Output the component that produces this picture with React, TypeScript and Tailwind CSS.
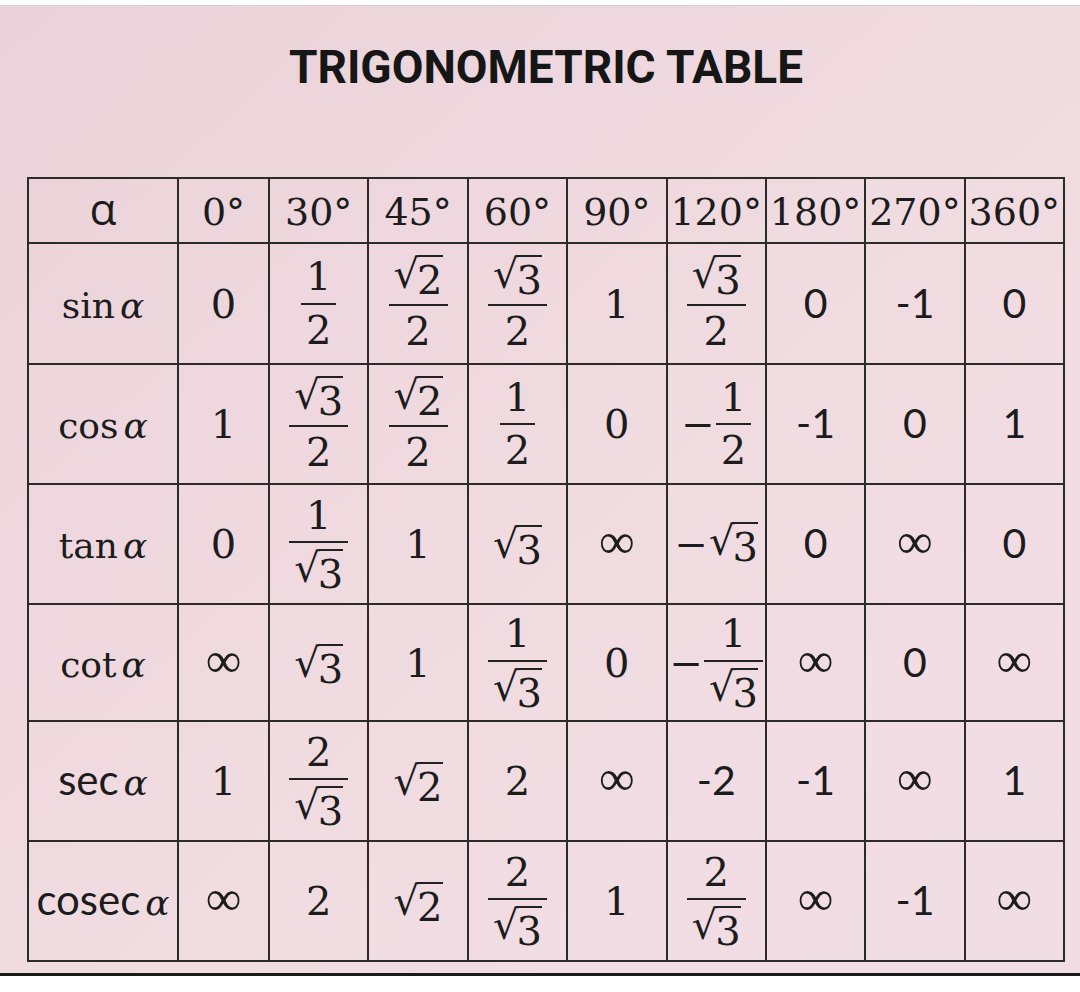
import type { ReactNode } from "react";

const serif = "font-['DejaVu_Serif',serif]";
const sans = "font-['Lato',sans-serif]";

function Sqrt({ n }: { n: string }) {
  return (
    <span className="inline-flex items-start leading-none">
      <span className="leading-none">√</span>
      <span className="-ml-[2px] mt-[1px] border-t-2 border-[#222] pt-[3px] leading-none">
        {n}
      </span>
    </span>
  );
}

function Frac({ num, den }: { num: ReactNode; den: ReactNode }) {
  return (
    <span className="inline-flex flex-col items-center align-middle">
      <span className="px-[5px] leading-[1.08]">{num}</span>
      <span className="my-[4px] h-[2px] self-stretch bg-[#222]" />
      <span className="px-[5px] leading-[1.08]">{den}</span>
    </span>
  );
}

function Neg({ children }: { children: ReactNode }) {
  return (
    <span className="inline-flex items-center">
      <span className="mr-px leading-none">−</span>
      {children}
    </span>
  );
}

const S = ({ children }: { children: ReactNode }) => (
  <span className={`${serif} leading-none`}>{children}</span>
);
const N = ({ children }: { children: ReactNode }) => (
  <span className={`${sans} text-[41px] leading-none`}>{children}</span>
);
const Inf = () => (
  <span className="font-['Liberation_Serif',serif] text-[50px] leading-none">∞</span>
);

const r3 = <Sqrt n="3" />;
const r2 = <Sqrt n="2" />;

const header = ["0°", "30°", "45°", "60°", "90°", "120°", "180°", "270°", "360°"];

const rows: { fn: string; label: "serif" | "sans"; h: string; cells: ReactNode[] }[] = [
  {
    fn: "sin",
    label: "serif",
    h: "h-[121px]",
    cells: [
      <S>0</S>,
      <Frac num="1" den="2" />,
      <Frac num={r2} den="2" />,
      <Frac num={r3} den="2" />,
      <S>1</S>,
      <Frac num={r3} den="2" />,
      <N>0</N>,
      <N>-1</N>,
      <N>0</N>,
    ],
  },
  {
    fn: "cos",
    label: "serif",
    h: "h-[120px]",
    cells: [
      <S>1</S>,
      <Frac num={r3} den="2" />,
      <Frac num={r2} den="2" />,
      <Frac num="1" den="2" />,
      <S>0</S>,
      <Neg>
        <Frac num="1" den="2" />
      </Neg>,
      <N>-1</N>,
      <N>0</N>,
      <N>1</N>,
    ],
  },
  {
    fn: "tan",
    label: "serif",
    h: "h-[120px]",
    cells: [
      <S>0</S>,
      <Frac num="1" den={r3} />,
      <S>1</S>,
      r3,
      <Inf />,
      <Neg>{r3}</Neg>,
      <N>0</N>,
      <Inf />,
      <N>0</N>,
    ],
  },
  {
    fn: "cot",
    label: "serif",
    h: "h-[117px]",
    cells: [
      <Inf />,
      r3,
      <S>1</S>,
      <Frac num="1" den={r3} />,
      <S>0</S>,
      <Neg>
        <Frac num="1" den={r3} />
      </Neg>,
      <Inf />,
      <N>0</N>,
      <Inf />,
    ],
  },
  {
    fn: "sec",
    label: "sans",
    h: "h-[120px]",
    cells: [
      <S>1</S>,
      <Frac num="2" den={r3} />,
      r2,
      <S>2</S>,
      <Inf />,
      <N>-2</N>,
      <N>-1</N>,
      <Inf />,
      <N>1</N>,
    ],
  },
  {
    fn: "cosec",
    label: "sans",
    h: "h-[120px]",
    cells: [
      <Inf />,
      <S>2</S>,
      r2,
      <Frac num="2" den={r3} />,
      <S>1</S>,
      <Frac num="2" den={r3} />,
      <Inf />,
      <N>-1</N>,
      <Inf />,
    ],
  },
];

const cell = "border-2 border-[#2b2b2b] p-0 text-center align-middle";

export default function App() {
  return (
    <div className="flex min-h-[992px] w-[1080px] flex-col bg-white text-[#1c1c1c]">
      <div className="h-[5px] bg-white" />
      <div className="h-px bg-[#d8cfd2]" />
      <div className="h-[967px] bg-linear-to-br from-[#ebd1d9] via-[#f0dbe1] to-[#f1dee4] pl-[27px] pr-[15px]">
        <h1 className="pt-[38px] text-center font-['Roboto',sans-serif] text-[46px] font-bold leading-none text-[#161616]">
          TRIGONOMETRIC TABLE
        </h1>

        <table className={`mt-[87px] w-[1038px] table-fixed border-collapse ${serif} text-[40px]`}>
          <colgroup>
            <col className="w-[150px]" />
            <col className="w-[91px]" />
            {header.slice(1).map((h) => (
              <col key={h} />
            ))}
          </colgroup>
          <tbody>
            <tr className="h-[65px]">
              <td className={cell}>
                <span className="font-['Open_Sans',sans-serif] text-[44px] leading-none">α</span>
              </td>
              {header.map((h) => (
                <td key={h} className={cell}>
                  <span className="text-[38px] leading-none">{h}</span>
                </td>
              ))}
            </tr>
            {rows.map((row) => (
              <tr key={row.fn} className={row.h}>
                <td className={cell}>
                  <span
                    className={
                      row.label === "serif"
                        ? "font-['DejaVu_Serif',serif] text-[36px] leading-none"
                        : "font-['Lato',sans-serif] text-[42px] leading-none"
                    }
                  >
                    {row.fn}
                  </span>
                  <i className="ml-[5px] font-['DejaVu_Serif',serif] text-[36px] leading-none">α</i>
                </td>
                {row.cells.map((c, i) => (
                  <td key={i} className={cell}>
                    {c}
                  </td>
                ))}
              </tr>
            ))}
          </tbody>
        </table>
      </div>
      <div className="h-[3px] bg-[#1a1a1a]" />
      <div className="flex-1 bg-white" />
    </div>
  );
}
